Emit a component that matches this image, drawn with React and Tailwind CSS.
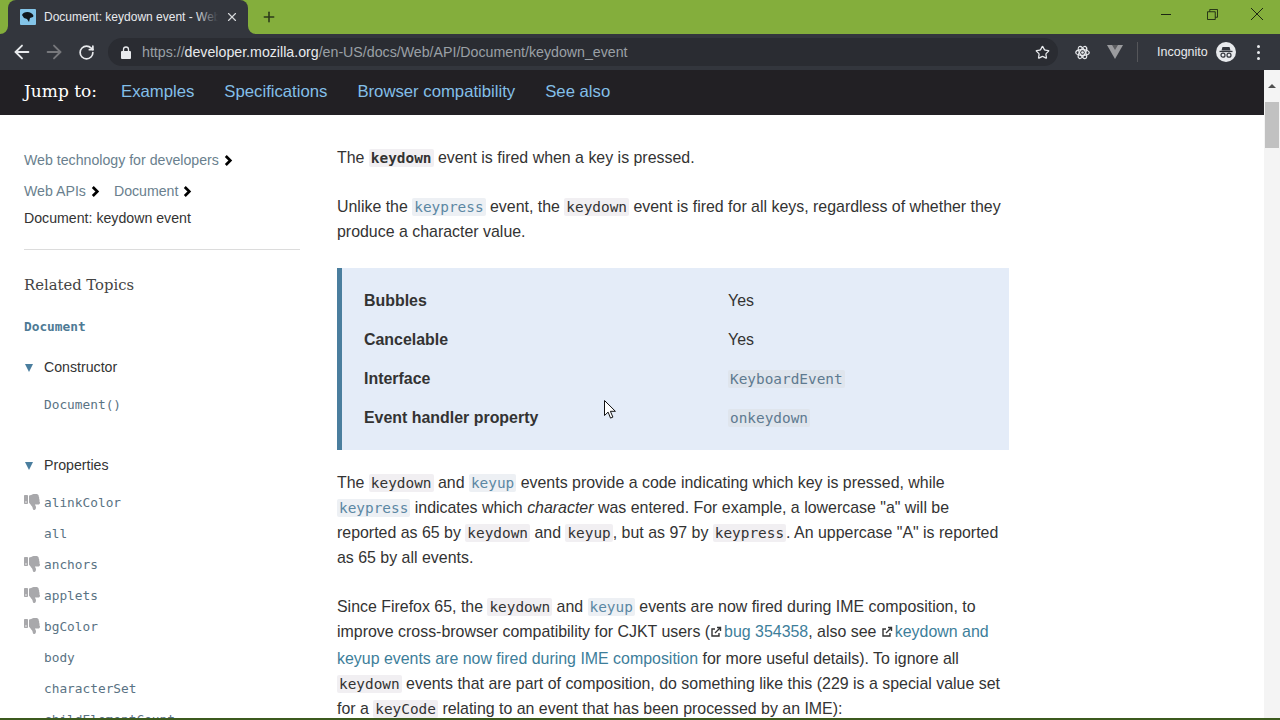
import { FaThumbsDown } from "react-icons/fa";
import { ArrowLeft, ArrowRight, RotateCw, Star, Plus, X } from "lucide-react";

const sans = "font-['Liberation_Sans',Arial,sans-serif]";

function Code({ children, link, bold, inBox }) {
  let tone = "bg-[#f1eff2] text-[#333]";
  if (link) tone = "bg-[#edf0f4] text-[#5b87a3]";
  if (inBox) tone = "bg-[#dfe5ed] text-[#5e7a90]";
  return (
    <code
      className={`font-['DejaVu_Sans_Mono',monospace] text-[14.4px] leading-none px-[2px] py-[1px] rounded-[2px] ${tone} ${
        bold ? "font-bold" : ""
      }`}
    >
      {children}
    </code>
  );
}

function ExtIcon() {
  return (
    <svg viewBox="0 0 12 12" className="inline-block w-[12px] h-[12px] mr-[2px] align-[-1px]" fill="none" stroke="#333" strokeWidth="1.4">
      <path d="M9 7v3H2V3h3" />
      <path d="M5 7l5-5M7 1.5h3.500V5" />
    </svg>
  );
}

function Chevron() {
  return (
    <svg viewBox="0 0 10 12" className="w-[9px] h-[11px] -mt-[2px]" fill="none" stroke="#000" strokeWidth="3">
      <path d="M2 1l5 5-5 5" />
    </svg>
  );
}

function Crumb({ children }) {
  return (
    <span className="inline-flex items-center gap-[5px] text-[#6a7f8e]">
      {children}
      <Chevron />
    </span>
  );
}

function SideLink({ children, deprecated }) {
  return (
    <div className="relative h-[31px] pl-[20px] flex items-center font-['DejaVu_Sans_Mono',monospace] text-[12.8px] text-[#5a7384]">
      {deprecated && <FaThumbsDown className="absolute left-0 top-[7px] w-[16px] h-[16px] text-[#a8a8ab]" />}
      {children}
    </div>
  );
}

function SideHead({ children }) {
  return (
    <div className="flex items-center h-[20px] text-[#333]">
      <span className="w-[20px] pl-[1px]">
        <span className="block w-0 h-0 border-x-[4px] border-x-transparent border-t-[8px] border-t-[#4a7e9e]" />
      </span>
      {children}
    </div>
  );
}

function Row({ label, children }) {
  return (
    <div className="flex h-[39px] items-center">
      <div className="w-[364px] font-bold text-[#333]">{label}</div>
      <div>{children}</div>
    </div>
  );
}

function NavButton({ children }) {
  return <div className="w-[32px] flex items-center justify-center">{children}</div>;
}

function IncognitoIcon() {
  return (
    <svg viewBox="0 0 20 20" className="w-[20px] h-[20px]">
      <circle cx="10" cy="10" r="10" fill="#e8eaed" />
      <path d="M6.500 5h7l1 3.500h-9z" fill="#33363d" />
      <rect x="3.500" y="8.800" width="13" height="1.300" fill="#33363d" />
      <circle cx="7" cy="13.200" r="2" fill="none" stroke="#33363d" strokeWidth="1.200" />
      <circle cx="13" cy="13.200" r="2" fill="none" stroke="#33363d" strokeWidth="1.200" />
    </svg>
  );
}

function ReactLogo() {
  return (
    <svg viewBox="0 0 16 16" className="w-[15px] h-[15px] ml-[17px]" fill="none" stroke="#e8eaed" strokeWidth="1.300">
      <ellipse cx="8" cy="8" rx="7.200" ry="3" />
      <ellipse cx="8" cy="8" rx="7.200" ry="3" transform="rotate(60 8 8)" />
      <ellipse cx="8" cy="8" rx="7.200" ry="3" transform="rotate(120 8 8)" />
      <circle cx="8" cy="8" r="1.400" fill="#e8eaed" stroke="none" />
    </svg>
  );
}

export default function App() {
  return (
    <div className={`relative h-screen w-[1280px] overflow-hidden flex flex-col bg-white ${sans}`}>
      {/* tab strip */}
      <div className="h-[34px] shrink-0 bg-[#84ae3c] flex items-end pl-[8px]">
        <div className="relative w-[240px] h-[34px] bg-[#33363d] rounded-t-[8px] flex items-center pl-[12px] pr-[9px] text-[12px] text-[#e8eaed]">
          <svg viewBox="0 0 8 8" className="absolute left-[-8px] bottom-0 w-[8px] h-[8px]">
            <path d="M8 0v8H0a8 8 0 0 0 8-8z" fill="#33363d" />
          </svg>
          <svg viewBox="0 0 8 8" className="absolute right-[-8px] bottom-0 w-[8px] h-[8px]">
            <path d="M0 0v8h8a8 8 0 0 1-8-8z" fill="#33363d" />
          </svg>
          <svg viewBox="0 0 16 16" className="w-[16px] h-[16px] shrink-0">
            <rect width="16" height="16" rx="1" fill="#83c4e8" />
            <path d="M2 6c1-3 6-4 9-2 2 1 3 3 2 4l-3 1-1 4-2-3-3-1z" fill="#10161c" />
          </svg>
          <span className="relative ml-[8px] flex-1 overflow-hidden whitespace-nowrap">
            Document: keydown event - Web
            <span className="absolute right-0 top-0 bottom-0 w-[22px] bg-gradient-to-r from-transparent to-[#33363d]" />
          </span>
          <X className="w-[14px] h-[14px] ml-[7px] shrink-0 text-[#d5d7da]" />
        </div>
        <Plus className="w-[16px] h-[16px] ml-[13px] mb-[9px] text-[#2c3a1a]" strokeWidth={2.4} />
        <div className="flex-1" />
        <div className="flex h-full items-center pb-[6px] text-[#1d2713]">
          <svg viewBox="0 0 10 10" className="w-[10px] h-[10px] mr-[36px]" fill="none" stroke="currentColor">
            <path d="M0 5.500h10" />
          </svg>
          <svg viewBox="0 0 12 12" className="w-[11px] h-[11px] mr-[33px]" fill="none" stroke="currentColor">
            <path d="M.5 3h8.500v8.500h-8.500zM3 3V.5h8.500V9H9" />
          </svg>
          <svg viewBox="0 0 12 12" className="w-[12px] h-[12px] mr-[17px]" fill="none" stroke="currentColor">
            <path d="M0 0l12 12M12 0L0 12" />
          </svg>
        </div>
      </div>

      {/* toolbar */}
      <div className="h-[36px] shrink-0 bg-[#33363d] flex items-center pl-[6px] text-[#e8eaed]">
        <NavButton><ArrowLeft className="w-[22px] h-[22px]" strokeWidth={2} /></NavButton>
        <NavButton><ArrowRight className="w-[22px] h-[22px] text-[#77787c]" strokeWidth={2} /></NavButton>
        <NavButton><RotateCw className="w-[17px] h-[17px]" strokeWidth={2.4} /></NavButton>
        <div className="ml-[6px] w-[950px] h-[28px] rounded-full bg-[#2a2c32] flex items-center pl-[13px] pr-[8px]">
          <svg viewBox="0 0 10 13" className="w-[10px] h-[13px] shrink-0">
            <rect y="5" width="10" height="8" rx="1" fill="#e8eaed" />
            <path d="M2.500 5.500V3.500a2.500 2.500 0 0 1 5 0v2" fill="none" stroke="#e8eaed" strokeWidth="1.300" />
          </svg>
          <span className="ml-[11px] pt-[1px] text-[14.2px] whitespace-nowrap text-[#9aa0a6]">
            https://<span className="text-[#e8eaed]">developer.mozilla.org</span>/en-US/docs/Web/API/Document/keydown_event
          </span>
          <div className="flex-1" />
          <Star className="w-[15px] h-[15px]" />
        </div>
        <ReactLogo />
        <svg viewBox="0 0 16 14" className="w-[16px] h-[14px] ml-[17px]">
          <path d="M0 0h16L8 14z" fill="#9a9b9e" />
          <path d="M5 0h6L8 5z" fill="#5c5d60" />
        </svg>
        <div className="w-px h-[20px] bg-[#55565a] ml-[14px]" />
        <span className="ml-[19px] text-[12.5px]">Incognito</span>
        <div className="ml-[8px]"><IncognitoIcon /></div>
        <div className="ml-[21px] flex flex-col gap-[3px]">
          <span className="w-[3px] h-[3px] rounded-full bg-[#e8eaed]" />
          <span className="w-[3px] h-[3px] rounded-full bg-[#e8eaed]" />
          <span className="w-[3px] h-[3px] rounded-full bg-[#e8eaed]" />
        </div>
      </div>

      <div className="flex-1 flex min-h-0">
        <div className="w-[1264px] flex flex-col min-h-0">
          {/* jump bar */}
          <div className="h-[45px] shrink-0 bg-[#222024] flex items-center pl-[24px] pb-[1px] text-[16.72px] text-[#83bfe8]">
            <span className="font-['DejaVu_Serif',serif] text-[17px] text-white w-[97px]">Jump to:</span>
            <div className="flex gap-[30px]">
              <span>Examples</span>
              <span>Specifications</span>
              <span>Browser compatibility</span>
              <span>See also</span>
            </div>
          </div>

          <div className="flex flex-1 min-h-0 overflow-hidden">
            {/* sidebar */}
            <aside className="w-[276px] ml-[24px] shrink-0 pt-[36px] text-[14.16px]">
              <div className="h-[20px] flex items-center"><Crumb>Web technology for developers</Crumb></div>
              <div className="h-[20px] mt-[11px] flex items-center gap-[14px]">
                <Crumb>Web APIs</Crumb>
                <Crumb>Document</Crumb>
              </div>
              <div className="h-[20px] mt-[7px] flex items-center text-[#333]">Document: keydown event</div>
              <div className="h-px bg-[#dcdcdc] mt-[20px]" />
              <div className="mt-[25px] h-[20px] flex items-center font-['DejaVu_Serif',serif] text-[14.8px] text-[#444]">Related Topics</div>
              <div className="mt-[22px] h-[20px] flex items-center font-['DejaVu_Sans_Mono',monospace] font-bold text-[12.8px] text-[#4e7a95]">Document</div>
              <div className="mt-[21px]"><SideHead>Constructor</SideHead></div>
              <div className="mt-[11px]"><SideLink>Document()</SideLink></div>
              <div className="mt-[36px]"><SideHead>Properties</SideHead></div>
              <div className="mt-[11px]">
                <SideLink deprecated>alinkColor</SideLink>
                <SideLink>all</SideLink>
                <SideLink deprecated>anchors</SideLink>
                <SideLink deprecated>applets</SideLink>
                <SideLink deprecated>bgColor</SideLink>
                <SideLink>body</SideLink>
                <SideLink>characterSet</SideLink>
                <SideLink>childElementCount</SideLink>
              </div>
            </aside>

            {/* article */}
            <main className="ml-[37px] w-[672px] shrink-0 pt-[30px] text-[15.93px] leading-[25px] text-[#333]">
              <p>The <Code bold>keydown</Code> event is fired when a key is pressed.</p>
              <p className="mt-[24px]">
                Unlike the <Code link>keypress</Code> event, the <Code>keydown</Code> event is fired for all keys, regardless of whether they
                <br />produce a character value.
              </p>
              <div className="mt-[24px] h-[182px] bg-[#e4ecf8] border-l-[5px] border-[#4a7e9e] pl-[22px] py-[13px]">
                <Row label="Bubbles">Yes</Row>
                <Row label="Cancelable">Yes</Row>
                <Row label="Interface"><Code inBox>KeyboardEvent</Code></Row>
                <Row label="Event handler property"><Code inBox>onkeydown</Code></Row>
              </div>
              <p className="mt-[20px]">
                The <Code>keydown</Code> and <Code link>keyup</Code> events provide a code indicating which key is pressed, while
                <br /><Code link>keypress</Code> indicates which <em>character</em> was entered. For example, a lowercase "a" will be
                <br />reported as 65 by <Code>keydown</Code> and <Code>keyup</Code>, but as 97 by <Code>keypress</Code>. An uppercase "A" is reported
                <br />as 65 by all events.
              </p>
              <p className="mt-[24px]">
                Since Firefox 65, the <Code>keydown</Code> and <Code link>keyup</Code> events are now fired during IME composition, to
                <br />improve cross-browser compatibility for CJKT users (<ExtIcon /><span className="text-[#3d7e9a]">bug 354358</span>, also see <ExtIcon /><span className="text-[#3d7e9a]">keydown and</span>
              </p>
              <p className="mt-[2px]">
                <span className="text-[#3d7e9a]">keyup events are now fired during IME composition</span> for more useful details). To ignore all
                <br /><Code>keydown</Code> events that are part of composition, do something like this (229 is a special value set
                <br />for a <Code>keyCode</Code> relating to an event that has been processed by an IME):
              </p>
            </main>
          </div>
        </div>

        {/* scrollbar */}
        <div className="w-[16px] shrink-0 bg-[#f4f4f4] flex flex-col items-center">
          <div className="h-[32px] flex items-center justify-center">
            <div className="w-0 h-0 border-x-[4px] border-x-transparent border-b-[4px] border-b-[#505050]" />
          </div>
          <div className="w-[14px] h-[46px] bg-[#c1c1c1]" />
        </div>
      </div>

      {/* window frame edge */}
      <div className="h-[2px] shrink-0 bg-[#3c5a1e]" />

      {/* mouse pointer */}
      <svg viewBox="0 0 12 20" className="absolute left-[604px] top-[400px] w-[12px] h-[20px]">
        <path d="M.5.5v15l3.600-3.400 2.400 6 2.400-1-2.500-5.800h5z" fill="#fff" stroke="#111" strokeWidth="1" />
      </svg>
    </div>
  );
}
